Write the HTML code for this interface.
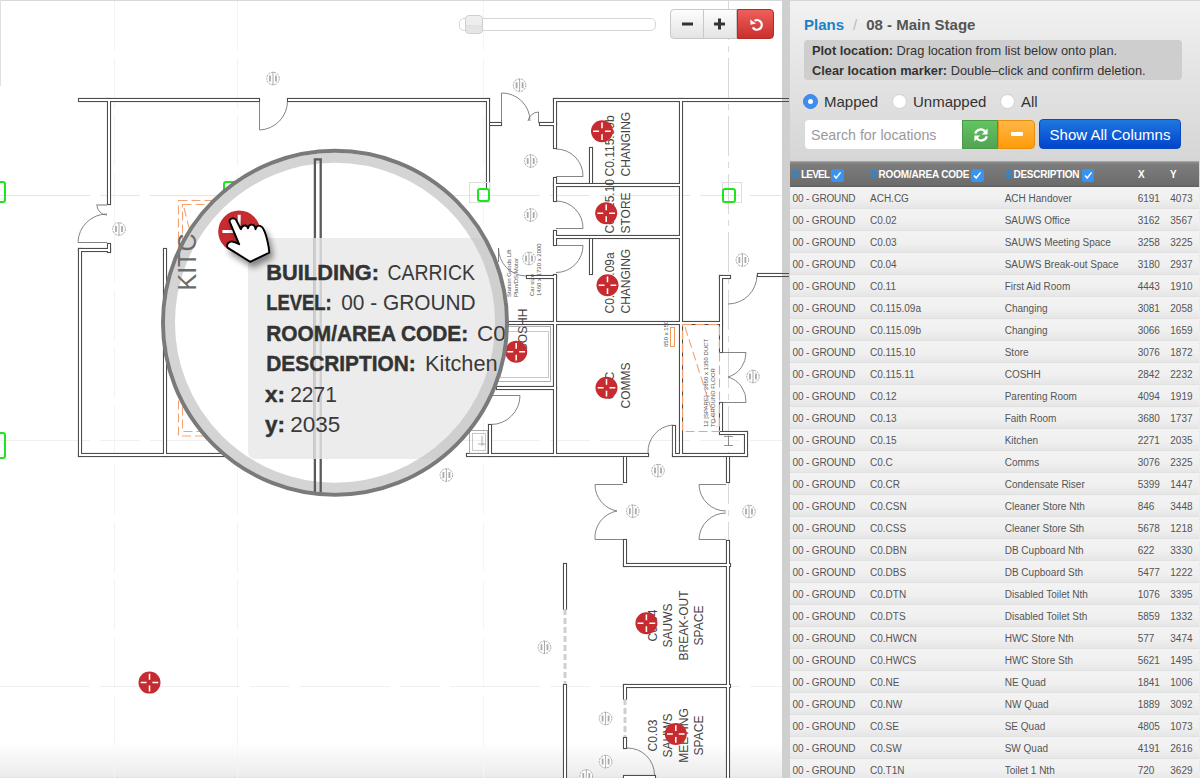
<!DOCTYPE html>
<html><head><meta charset="utf-8">
<style>
*{box-sizing:border-box;margin:0;padding:0}
html,body{width:1200px;height:778px;overflow:hidden;background:#fff;font-family:"Liberation Sans",sans-serif}
.abs{position:absolute}
#map{position:absolute;left:0;top:0;width:782px;height:778px;overflow:hidden;background:linear-gradient(#fff 0,#fff 742px,#ececec 776px,#e2e2e2 778px)}
#split{position:absolute;left:782px;top:0;width:8px;height:778px;background:#cfcfcf}
#panel{position:absolute;left:790px;top:0;width:410px;height:778px;background:linear-gradient(#d6d6d6 0,#d6d6d6 1px,#f2f2f2 1px,#e6e6e6 60px,#d6d6d6 160px)}
.crumb{position:absolute;left:14px;top:16px;font-size:15px;font-weight:bold;color:#555;white-space:nowrap}
.crumb .p{color:#1a82c8}
.crumb .s{color:#bbb;font-weight:normal;padding:0 9px}
.info{position:absolute;left:14px;top:40px;width:378px;height:40px;background:#cecece;border-radius:4px;font-size:12.8px;color:#333;padding:1px 0 0 8px;line-height:20px;white-space:nowrap}
.radio{position:absolute;top:93px;font-size:15px;color:#333;white-space:nowrap}
.rb{position:absolute;top:94px;width:15px;height:15px;border-radius:50%;background:#fff;border:1px solid #d0d0d0}
.rb.on{background:#3d8ef0;border-color:#3a86e6}
.rb.on:after{content:"";position:absolute;left:4px;top:4px;width:5px;height:5px;border-radius:50%;background:#fff}
.search{position:absolute;left:15px;top:120px;width:157px;height:29px;background:#fff;border-radius:4px 0 0 4px;font-size:14.2px;color:#9a9a9a;padding:7px 0 0 6px;white-space:nowrap}
.bg{position:absolute;left:172px;top:120px;width:36px;height:29px;background:linear-gradient(#62c462,#51a351);border:1px solid #4a9a4a}
.bo{position:absolute;left:208px;top:120px;width:37px;height:29px;background:linear-gradient(#ffb547,#fe9c08);border:1px solid #e8900c;border-radius:0 4px 4px 0}
.bb{position:absolute;left:249px;top:119px;width:142px;height:30px;background:linear-gradient(#1f78e0,#0044cc);border:1px solid #0a4bb8;border-radius:4px;color:#fff;font-size:15px;text-align:center;line-height:29px;white-space:nowrap}
#thead{position:absolute;left:0;top:161px;width:409px;height:26px;background:linear-gradient(#bdbdbd 0,#8c8c8c 1px,#8a8a8a 2px,#7c7c7c 3px,#6c6c6c 24px,#5e5e5e 26px);color:#fff;font-size:10px;font-weight:bold}
#thead span{position:absolute;top:8px;white-space:nowrap}
.sort{position:absolute;top:8px}
.chk{position:absolute;top:8px;width:12.5px;height:12.5px;background:#3794f2;border-radius:2.5px}.chk svg{display:block}
#rows{position:absolute;left:0;top:187px;width:409px}
.r{position:relative;height:22px;background:linear-gradient(#f3f3f3 0,#f0f0f0 12px,#e6e6e6 21px,#dcdcdc 22px);font-size:10px;color:#555;white-space:nowrap}
.r span{position:absolute;top:6px}
.c1{left:2.5px;letter-spacing:-0.15px}.c2{left:80px}.c3{left:214.7px}.c4{left:347.7px}.c5{left:380.3px}
#ctrl .track{position:absolute;left:459px;top:18px;width:197px;height:13px;border:1px solid #d6d6d6;border-radius:5px;background:#fff}
#ctrl .handle{position:absolute;left:465px;top:15px;width:18px;height:19px;border:1px solid #cfcfcf;border-radius:4px;background:linear-gradient(#f0f0f0,#ececec 50%,#e2e2e2 51%,#e6e6e6)}
#ctrl .zb{position:absolute;top:9px;height:30px}
#ctrl .zm{left:670px;width:34px;border:1px solid #c8c8c8;border-radius:4px 0 0 4px;background:linear-gradient(#fdfdfd,#e4e4e4)}
#ctrl .zp{left:703px;width:34px;border:1px solid #c8c8c8;background:linear-gradient(#fdfdfd,#e4e4e4)}
#ctrl .zr{left:737px;width:37px;border:1px solid #b62a25;border-radius:0 4px 4px 0;background:linear-gradient(#ee5f5b,#c9302c)}
#ctrl .zb svg{position:absolute;left:-1px;top:-1px}
</style></head><body>
<div id="map">
<svg id="plan" width="782" height="778" viewBox="0 0 782 778">
<g stroke="#e6e6e6" stroke-width="1" fill="none">
<path d="M0 195.5H782" stroke-dasharray="90 10 40 10"/>
<path d="M0 440.5H782" stroke="#f0f0f0" stroke-dasharray="90 10 40 10"/>
<path d="M0 686.5H782" stroke="#efefef" stroke-dasharray="90 10 40 10"/>
<path d="M114.5 0V778" stroke="#f3f3f3" stroke-dasharray="50 8"/>
<path d="M237.5 0V778" stroke="#f3f3f3" stroke-dasharray="50 8"/>
<path d="M483.5 0V778" stroke="#f5f5f5" stroke-dasharray="50 8"/>
<path d="M0 0.5H782" stroke="#d8d8d8"/><path d="M0.5 0V86" stroke="#e0e0e0"/>
<path d="M728.5 0V778" stroke="#d8d8d8" stroke-dasharray="40 6 6 6"/>
</g>
<g fill="none" stroke="#4d4d4d" stroke-width="1.15">
<rect x="78.5" y="98.5" width="181" height="3"/>
<rect x="287.5" y="98.5" width="202" height="3"/>
<rect x="486.5" y="98.5" width="3" height="91"/>
<rect x="489.5" y="122.5" width="12" height="3"/>
<rect x="539.5" y="122.5" width="17" height="3"/>
<rect x="553.5" y="98.5" width="3" height="50"/>
<rect x="553.5" y="98.5" width="229" height="3"/>
<rect x="679.5" y="98.5" width="3" height="358"/>
<rect x="553.5" y="183.5" width="127" height="3"/>
<rect x="553.5" y="235.5" width="127" height="3"/>
<rect x="553.5" y="177.5" width="3" height="24"/>
<rect x="553.5" y="230.5" width="3" height="15"/>
<rect x="553.5" y="274.5" width="3" height="182"/>
<rect x="589.5" y="147.5" width="3" height="36"/>
<rect x="589.5" y="238.5" width="3" height="36"/>
<rect x="526.5" y="275.5" width="30" height="3"/>
<rect x="78.5" y="248.5" width="3" height="208"/>
<rect x="78.5" y="248.5" width="32" height="3"/>
<rect x="107.5" y="243.5" width="3" height="9"/>
<rect x="107.5" y="98.5" width="3" height="106"/>
<rect x="163.5" y="248.5" width="3" height="208"/>
<rect x="78.5" y="453.5" width="152" height="3"/>
<rect x="466.5" y="453.5" width="182" height="3"/>
<rect x="672.5" y="453.5" width="75" height="3"/>
<rect x="496.5" y="386.5" width="60" height="3"/>
<rect x="488.5" y="424.5" width="3" height="32"/>
<rect x="496.5" y="321.5" width="226" height="3"/>
<rect x="719.5" y="275.5" width="3" height="77"/>
<rect x="719.5" y="275.5" width="11" height="3"/>
<rect x="757.5" y="273.5" width="25" height="3"/>
<rect x="719.5" y="402.5" width="3" height="29"/>
<rect x="719.5" y="431.5" width="28" height="3"/>
<rect x="744.5" y="431.5" width="3" height="25"/>
<rect x="672.5" y="425.5" width="3" height="31"/>
<rect x="726.5" y="456.5" width="3" height="26"/>
<rect x="726.5" y="540.5" width="3" height="238"/>
<rect x="623.5" y="563.5" width="107" height="3"/>
<rect x="623.5" y="456.5" width="3" height="26"/>
<rect x="623.5" y="539.5" width="3" height="27"/>
<rect x="563.5" y="563.5" width="3" height="46"/>
<rect x="563.5" y="684.5" width="3" height="94"/>
<rect x="623.5" y="684.5" width="107" height="3"/>
<rect x="623.5" y="684.5" width="3" height="15"/>
<rect x="623.5" y="737.5" width="3" height="11"/>
<rect x="623.5" y="775.5" width="32" height="3"/>
</g><g fill="#fff">
<rect x="79" y="99" width="180" height="2"/>
<rect x="288" y="99" width="201" height="2"/>
<rect x="487" y="99" width="2" height="90"/>
<rect x="490" y="123" width="11" height="2"/>
<rect x="540" y="123" width="16" height="2"/>
<rect x="554" y="99" width="2" height="49"/>
<rect x="554" y="99" width="228" height="2"/>
<rect x="680" y="99" width="2" height="357"/>
<rect x="554" y="184" width="126" height="2"/>
<rect x="554" y="236" width="126" height="2"/>
<rect x="554" y="178" width="2" height="23"/>
<rect x="554" y="231" width="2" height="14"/>
<rect x="554" y="275" width="2" height="181"/>
<rect x="590" y="148" width="2" height="35"/>
<rect x="590" y="239" width="2" height="35"/>
<rect x="527" y="276" width="29" height="2"/>
<rect x="79" y="249" width="2" height="207"/>
<rect x="79" y="249" width="31" height="2"/>
<rect x="108" y="244" width="2" height="8"/>
<rect x="108" y="99" width="2" height="105"/>
<rect x="164" y="249" width="2" height="207"/>
<rect x="79" y="454" width="151" height="2"/>
<rect x="467" y="454" width="181" height="2"/>
<rect x="673" y="454" width="74" height="2"/>
<rect x="497" y="387" width="59" height="2"/>
<rect x="489" y="425" width="2" height="31"/>
<rect x="497" y="322" width="225" height="2"/>
<rect x="720" y="276" width="2" height="76"/>
<rect x="720" y="276" width="10" height="2"/>
<rect x="758" y="274" width="24" height="2"/>
<rect x="720" y="403" width="2" height="28"/>
<rect x="720" y="432" width="27" height="2"/>
<rect x="745" y="432" width="2" height="24"/>
<rect x="673" y="426" width="2" height="30"/>
<rect x="727" y="457" width="2" height="25"/>
<rect x="727" y="541" width="2" height="237"/>
<rect x="624" y="564" width="106" height="2"/>
<rect x="624" y="457" width="2" height="25"/>
<rect x="624" y="540" width="2" height="26"/>
<rect x="564" y="564" width="2" height="45"/>
<rect x="564" y="685" width="2" height="93"/>
<rect x="624" y="685" width="106" height="2"/>
<rect x="624" y="685" width="2" height="14"/>
<rect x="624" y="738" width="2" height="10"/>
<rect x="624" y="776" width="31" height="2"/>
</g>
<path fill="none" stroke="#666" stroke-width="0.8" d="M259.5 101L259.5 130M259.5 130A29 29 0 0 0 287.5 101M501.5 123L501.5 93M501.5 93A28 28 0 0 1 530 121M538.5 123L538.5 112M538.5 112A11 11 0 0 0 528 121M556 176.5L583 176.5M556 149A27 27 0 0 1 583 176.5M556 228.5L583 228.5M556 201A27 27 0 0 1 583 228.5M556 245.5L583 245.5M583 245.5A27 27 0 0 1 556 272.5M78 242.5L107 242.5M78 242.5A29 29 0 0 1 107 214M97 205.5A10 10 0 0 0 107 215M526 276A28 28 0 0 1 498.5 248M498.5 248L498.5 262M491 395.5L520 395.5M520 395.5A29 29 0 0 1 491 424.5M672.5 425L672.5 453M648 453A27 27 0 0 1 672.5 425M728 304A29 29 0 0 0 757 275M719 352.5L746 352.5M746 352.5A25 25 0 0 1 728 377M719 402.5L746 402.5M746 402.5A25 25 0 0 0 728 377M699 484.5L726 484.5M699 484.5A27 27 0 0 0 726 511M699 539.5L726 539.5M699 539.5A27 27 0 0 1 726 513M595 484.5L623 484.5M595 484.5A27 27 0 0 0 617 511M595 539.5L623 539.5M595 539.5A27 27 0 0 1 617 511M627 748A27 27 0 0 1 654.5 775"/>
<path d="M96 205H107" stroke="#bbb" stroke-width="2"/>
<g stroke="#cfcfcf" stroke-width="3" stroke-dasharray="6 3"><path d="M565 609V684"/><path d="M625 699V737"/></g>
<g fill="none" stroke="#999" stroke-width="0.8">
<rect x="497.5" y="326.5" width="53" height="55"/><rect x="500.5" y="331.5" width="48" height="46" stroke="#bbb"/>
<rect x="469.5" y="430.5" width="18" height="23"/><rect x="472.5" y="433.5" width="13" height="17" stroke="#bbb"/>
<path d="M478 444h8M482 436v10"/>
<path d="M724 436.5h9M724 445.5h9M728.5 436v10" stroke="#777"/>
</g>
<g fill="#fff" stroke="#888" stroke-width="0.7">
<circle cx="273" cy="78.5" r="6.3" stroke-dasharray="2.2 0.8"/><path d="M273 72.0v13" stroke="#888"/><path d="M270 75.5v6M276 75.5v6" stroke="#aaa" stroke-width="1.8"/>
<circle cx="519.6" cy="85.2" r="6.3" stroke-dasharray="2.2 0.8"/><path d="M519.6 78.7v13" stroke="#888"/><path d="M516.6 82.2v6M522.6 82.2v6" stroke="#aaa" stroke-width="1.8"/>
<circle cx="530.7" cy="161" r="6.3" stroke-dasharray="2.2 0.8"/><path d="M530.7 154.5v13" stroke="#888"/><path d="M527.7 158v6M533.7 158v6" stroke="#aaa" stroke-width="1.8"/>
<circle cx="530.7" cy="215" r="6.3" stroke-dasharray="2.2 0.8"/><path d="M530.7 208.5v13" stroke="#888"/><path d="M527.7 212v6M533.7 212v6" stroke="#aaa" stroke-width="1.8"/>
<circle cx="529" cy="258.5" r="6.3" stroke-dasharray="2.2 0.8"/><path d="M529 252.0v13" stroke="#888"/><path d="M526 255.5v6M532 255.5v6" stroke="#aaa" stroke-width="1.8"/>
<circle cx="742.4" cy="260" r="6.3" stroke-dasharray="2.2 0.8"/><path d="M742.4 253.5v13" stroke="#888"/><path d="M739.4 257v6M745.4 257v6" stroke="#aaa" stroke-width="1.8"/>
<circle cx="753" cy="376.5" r="6.3" stroke-dasharray="2.2 0.8"/><path d="M753 370.0v13" stroke="#888"/><path d="M750 373.5v6M756 373.5v6" stroke="#aaa" stroke-width="1.8"/>
<circle cx="658" cy="470.6" r="6.3" stroke-dasharray="2.2 0.8"/><path d="M658 464.1v13" stroke="#888"/><path d="M655 467.6v6M661 467.6v6" stroke="#aaa" stroke-width="1.8"/>
<circle cx="749" cy="511.5" r="6.3" stroke-dasharray="2.2 0.8"/><path d="M749 505.0v13" stroke="#888"/><path d="M746 508.5v6M752 508.5v6" stroke="#aaa" stroke-width="1.8"/>
<circle cx="632.8" cy="511.2" r="6.3" stroke-dasharray="2.2 0.8"/><path d="M632.8 504.7v13" stroke="#888"/><path d="M629.8 508.2v6M635.8 508.2v6" stroke="#aaa" stroke-width="1.8"/>
<circle cx="446.4" cy="475" r="6.3" stroke-dasharray="2.2 0.8"/><path d="M446.4 468.5v13" stroke="#888"/><path d="M443.4 472v6M449.4 472v6" stroke="#aaa" stroke-width="1.8"/>
<circle cx="544.5" cy="647.3" r="6.3" stroke-dasharray="2.2 0.8"/><path d="M544.5 640.8v13" stroke="#888"/><path d="M541.5 644.3v6M547.5 644.3v6" stroke="#aaa" stroke-width="1.8"/>
<circle cx="605.6" cy="718.5" r="6.3" stroke-dasharray="2.2 0.8"/><path d="M605.6 712.0v13" stroke="#888"/><path d="M602.6 715.5v6M608.6 715.5v6" stroke="#aaa" stroke-width="1.8"/>
<circle cx="605.6" cy="761.6" r="6.3" stroke-dasharray="2.2 0.8"/><path d="M605.6 755.1v13" stroke="#888"/><path d="M602.6 758.6v6M608.6 758.6v6" stroke="#aaa" stroke-width="1.8"/>
<circle cx="586.3" cy="776" r="6.3" stroke-dasharray="2.2 0.8"/><path d="M586.3 769.5v13" stroke="#888"/><path d="M583.3 773v6M589.3 773v6" stroke="#aaa" stroke-width="1.8"/>
<circle cx="119" cy="229" r="6.3" stroke-dasharray="2.2 0.8"/><path d="M119 222.5v13" stroke="#888"/><path d="M116 226v6M122 226v6" stroke="#aaa" stroke-width="1.8"/>
</g>
<g fill="none" stroke="#f5a270" stroke-width="1.1" stroke-dasharray="9 4">
<rect x="178.5" y="200.5" width="90" height="235.5"/><rect x="182.5" y="204.5" width="80" height="227"/><path d="M184 208L205 290"/>
<rect x="682.5" y="324.5" width="37" height="107"/><path d="M685 327L717 427"/>
</g>
<rect x="670.5" y="327.5" width="4" height="19" fill="none" stroke="#f39a5e" stroke-width="1"/>
<g fill="none" stroke="#dedede" stroke-width="1"><rect x="469.5" y="182.5" width="20" height="20"/><rect x="722.5" y="182.5" width="19" height="20"/></g>
<g fill="none" stroke="#1ee61e" stroke-width="2">
<rect x="-4" y="182" width="9" height="20" rx="2"/>
<rect x="-4" y="433" width="9" height="25" rx="2"/>
<rect x="478" y="189" width="11" height="12" rx="2"/>
<rect x="723" y="189" width="12" height="13" rx="2"/>
<rect x="224" y="182" width="12" height="13" rx="2"/>
</g>
<g font-family="Liberation Sans" font-size="12" fill="#444">
<text transform="translate(614 176.5) rotate(-90)" text-anchor="start">C0.115.09b</text><text transform="translate(630 176.5) rotate(-90)" text-anchor="start">CHANGING</text>
<text transform="translate(614 233.5) rotate(-90)" text-anchor="start">C0.115.10</text><text transform="translate(630 233.5) rotate(-90)" text-anchor="start">STORE</text>
<text transform="translate(614 313.5) rotate(-90)" text-anchor="start">C0.115.09a</text><text transform="translate(630 313.5) rotate(-90)" text-anchor="start">CHANGING</text>
<text transform="translate(614 385.5) rotate(-90)" text-anchor="middle">C0.C</text><text transform="translate(630 385.5) rotate(-90)" text-anchor="middle">COMMS</text>
<text transform="translate(526.5 352) rotate(-90)" text-anchor="start">COSHH</text>
<text transform="translate(657 625.5) rotate(-90)" text-anchor="middle">C0.04</text><text transform="translate(672 625.5) rotate(-90)" text-anchor="middle">SAUWS</text><text transform="translate(688 625.5) rotate(-90)" text-anchor="middle">BREAK-OUT</text><text transform="translate(702.5 625.5) rotate(-90)" text-anchor="middle">SPACE</text>
<text transform="translate(657 735.5) rotate(-90)" text-anchor="middle">C0.03</text><text transform="translate(672 735.5) rotate(-90)" text-anchor="middle">SAUWS</text><text transform="translate(688 735.5) rotate(-90)" text-anchor="middle">MEETING</text><text transform="translate(702.5 735.5) rotate(-90)" text-anchor="middle">SPACE</text>
</g>
<g font-family="Liberation Sans" font-size="6" fill="#555">
<text transform="translate(511 297) rotate(-90)" text-anchor="start">Station Goods Lift</text><text transform="translate(518 297) rotate(-90)" text-anchor="start">Plan/DS Motor</text>
<text transform="translate(534 296) rotate(-90)" text-anchor="start">Car size</text><text transform="translate(541 296) rotate(-90)" text-anchor="start">1460 x 1730 x 2000</text>
<text transform="translate(668 347) rotate(-90)" text-anchor="start">650 x 150</text>
<text transform="translate(708 427) rotate(-90)" text-anchor="start">12 [SPARE] - 2850 x 1350 DUCT</text><text transform="translate(715 427) rotate(-90)" text-anchor="start">TO GROUND FLOOR</text>
</g>
<circle cx="149.5" cy="682.6" r="11" fill="#c62b30"/><path d="M140.7 682.6H146.53M152.47 682.6H158.3M149.5 673.8000000000001V679.63M149.5 685.57V691.4" stroke="#fff" stroke-width="1.54"/>
<circle cx="602" cy="131.2" r="11" fill="#c62b30"/><path d="M593.2 131.2H599.03M604.97 131.2H610.8M602 122.39999999999999V128.23M602 134.17V140.0" stroke="#fff" stroke-width="1.54"/>
<circle cx="606.2" cy="213.2" r="11" fill="#c62b30"/><path d="M597.4000000000001 213.2H603.23M609.1700000000001 213.2H615.0M606.2 204.39999999999998V210.23M606.2 216.17V222.0" stroke="#fff" stroke-width="1.54"/>
<circle cx="607.5" cy="285.2" r="11" fill="#c62b30"/><path d="M598.7 285.2H604.53M610.47 285.2H616.3M607.5 276.4V282.22999999999996M607.5 288.17V294.0" stroke="#fff" stroke-width="1.54"/>
<circle cx="516.2" cy="351.7" r="11" fill="#c62b30"/><path d="M507.40000000000003 351.7H513.23M519.1700000000001 351.7H525.0M516.2 342.9V348.72999999999996M516.2 354.67V360.5" stroke="#fff" stroke-width="1.54"/>
<circle cx="606.5" cy="387.7" r="11" fill="#c62b30"/><path d="M597.7 387.7H603.53M609.47 387.7H615.3M606.5 378.9V384.72999999999996M606.5 390.67V396.5" stroke="#fff" stroke-width="1.54"/>
<circle cx="646.4" cy="623.2" r="11" fill="#c62b30"/><path d="M637.6 623.2H643.43M649.37 623.2H655.1999999999999M646.4 614.4000000000001V620.23M646.4 626.1700000000001V632.0" stroke="#fff" stroke-width="1.54"/>
<circle cx="675.8" cy="734" r="11" fill="#c62b30"/><path d="M667.0 734H672.8299999999999M678.77 734H684.5999999999999M675.8 725.2V731.03M675.8 736.97V742.8" stroke="#fff" stroke-width="1.54"/>
<defs><clipPath id="lc"><circle cx="335" cy="322.7" r="172"/></clipPath><filter id="hs" x="-50%" y="-50%" width="200%" height="200%"><feGaussianBlur in="SourceAlpha" stdDeviation="3"/><feOffset dx="3" dy="5"/><feComponentTransfer><feFuncA type="linear" slope="0.45"/></feComponentTransfer><feMerge><feMergeNode/><feMergeNode in="SourceGraphic"/></feMerge></filter></defs>
<g clip-path="url(#lc)">
<circle cx="335" cy="322.7" r="174" fill="#fff"/>
<rect x="248" y="238" width="300" height="221" rx="7" fill="#ebebeb" fill-opacity="0.93"/>
<circle cx="335" cy="322.7" r="165" fill="none" stroke="#c6c6c6" stroke-opacity="0.75" stroke-width="10"/>
<rect x="314.9" y="159.4" width="5.8" height="340" fill="none" stroke="#5a5a5a" stroke-width="2.3"/>
<rect x="314" y="238" width="8" height="221" fill="#ebebeb" fill-opacity="0.8"/>
<g font-family="Liberation Sans" font-size="22.5" fill="#333">
<text x="266.3" y="279.7" font-weight="bold" stroke="#333" stroke-width="0.45" textLength="112.6" lengthAdjust="spacingAndGlyphs">BUILDING:</text><text x="387.6" y="279.7" fill="#3a3a3a" textLength="87.4" lengthAdjust="spacingAndGlyphs">CARRICK</text>
<text x="266.3" y="310.2" font-weight="bold" stroke="#333" stroke-width="0.45" textLength="65.4" lengthAdjust="spacingAndGlyphs">LEVEL:</text><text x="341.2" y="310.2" fill="#3a3a3a" textLength="134.4" lengthAdjust="spacingAndGlyphs">00 - GROUND</text>
<text x="266.3" y="340.7" font-weight="bold" stroke="#333" stroke-width="0.45" textLength="201.9" lengthAdjust="spacingAndGlyphs">ROOM/AREA CODE:</text><text x="477" y="340.7" fill="#3a3a3a">C0.15</text>
<text x="266.3" y="371.2" font-weight="bold" stroke="#333" stroke-width="0.45" textLength="149.4" lengthAdjust="spacingAndGlyphs">DESCRIPTION:</text><text x="425" y="371.2" fill="#3a3a3a" textLength="72.7" lengthAdjust="spacingAndGlyphs">Kitchen</text>
<text x="265" y="401.7" font-weight="bold" stroke="#333" stroke-width="0.45">x:</text><text x="290.2" y="401.7" fill="#3a3a3a" textLength="46.6" lengthAdjust="spacingAndGlyphs">2271</text>
<text x="265" y="432.2" font-weight="bold" stroke="#333" stroke-width="0.45">y:</text><text x="290.2" y="432.2" fill="#3a3a3a">2035</text>
</g>
<circle cx="239.2" cy="231.5" r="21" fill="#c62b30"/><path d="M222.39999999999998 231.5H233.53M244.86999999999998 231.5H256.0M239.2 214.7V225.83M239.2 237.17V248.3" stroke="#fff" stroke-width="2.94"/>
<path d="M232.6,218.4 C230.6,218.6 229.2,220 229.6,221.7 L239.2,244.3 C236,242.4 232.5,240.8 230,241.8 C227.8,242.6 226.4,245 227.5,247.6 L250.1,261.8 L269.3,252.6 C268.9,248 268.4,245 267.6,241.8 C266.6,237 265.3,232.5 263.5,229.2 C262.8,227.6 261.8,226.6 261,226.3 C259.6,225.6 258.2,225.4 257.2,226.2 C256.4,226.8 255.8,228 255.5,229.2 C255.2,226.4 253.4,224.6 251.4,224.6 C249.6,224.6 248.4,226.4 248,228.4 C247.6,226.4 246,225.2 244.3,225.5 C242.6,225.8 241.4,227.4 240.9,229.2 L235.9,219.6 C235.2,218.8 234,218.3 232.6,218.4 Z" fill="#fff" stroke="#000" stroke-width="1.9" stroke-linejoin="round" filter="url(#hs)"/>
</g>
<text transform="translate(195.5 290.5) rotate(-90)" font-family="Liberation Sans" font-size="25" fill="#6a6a6a">KITC</text>
<circle cx="335" cy="322.7" r="172" fill="none" stroke="#7a7a7a" stroke-width="4"/>
</svg>
</div>
<div id="ctrl">
  <div class="track"></div><div class="handle"></div>
  <div class="zb zm"><svg width="34" height="30"><rect x="12" y="13.5" width="11" height="3" fill="#333"/></svg></div>
  <div class="zb zp"><svg width="33" height="30"><rect x="11" y="13.5" width="11" height="3" fill="#333"/><rect x="15" y="9.5" width="3" height="11" fill="#333"/></svg></div>
  <div class="zb zr"><svg width="37" height="30"><path d="M15.8 18.3A4.8 4.8 0 1 0 17.6 11.7" fill="none" stroke="#fff" stroke-width="2.3"/><path d="M13.2 10.4L13.6 15.8L19 14.4Z" fill="#fff"/></svg></div>
</div>
<div id="split"></div><div class="abs" style="left:782px;top:98px;width:7px;height:4px;border-top:1.15px solid #4d4d4d;border-bottom:1.15px solid #4d4d4d"></div><div class="abs" style="left:782px;top:273px;width:7px;height:4px;border-top:1.15px solid #4d4d4d;border-bottom:1.15px solid #4d4d4d"></div>
<div id="panel">
  <div class="crumb"><span class="p">Plans</span><span class="s">/</span>08 - Main Stage</div>
  <div class="info"><b>Plot location:</b> Drag location from list below onto plan.<br><b>Clear location marker:</b> Double–click and confirm deletion.</div>
  <div class="rb on" style="left:13px"></div><div class="radio" style="left:34px">Mapped</div>
  <div class="rb" style="left:102px"></div><div class="radio" style="left:123px">Unmapped</div>
  <div class="rb" style="left:210px"></div><div class="radio" style="left:231px">All</div>
  <div class="search">Search for locations</div>
  <div class="bg"><svg width="36" height="29" style="position:absolute;left:-1px;top:-1px"><g fill="none" stroke="#fff" stroke-width="2.2"><path d="M13.2 13.6A5.6 5.6 0 0 1 23.4 12.2"/><path d="M24.8 16.4A5.6 5.6 0 0 1 14.6 17.8"/></g><path d="M25.6 8.6V14.4H19.8Z M12.4 21.4V15.6H18.2Z" fill="#fff"/></svg></div>
  <div class="bo"><div style="position:absolute;left:12px;top:11px;width:11.6px;height:3.8px;background:#fff;border-radius:1px"></div></div>
  <div class="bb">Show All Columns</div>
  <div id="thead">
    <svg class="sort" style="left:2px" width="7" height="10" viewBox="0 0 7 10"><path d="M3.5 0L7 4.2H0Z M3.5 10L7 5.8H0Z" fill="#2389e0"/></svg><span style="left:11px;letter-spacing:-0.8px">LEVEL</span><div class="chk" style="left:41px"><svg width="12.5" height="12.5" viewBox="0 0 12.5 12.5"><path d="M3 6.6L5.2 9L9.6 3.4" fill="none" stroke="#fff" stroke-width="1.5"/></svg></div>
    <svg class="sort" style="left:80px" width="7" height="10" viewBox="0 0 7 10"><path d="M3.5 0L7 4.2H0Z M3.5 10L7 5.8H0Z" fill="#2389e0"/></svg><span style="left:88.6px;letter-spacing:-0.2px">ROOM/AREA CODE</span><div class="chk" style="left:181.4px"><svg width="12.5" height="12.5" viewBox="0 0 12.5 12.5"><path d="M3 6.6L5.2 9L9.6 3.4" fill="none" stroke="#fff" stroke-width="1.5"/></svg></div>
    <svg class="sort" style="left:214.6px" width="7" height="10" viewBox="0 0 7 10"><path d="M3.5 0L7 4.2H0Z M3.5 10L7 5.8H0Z" fill="#2389e0"/></svg><span style="left:223.4px;letter-spacing:-0.22px">DESCRIPTION</span><div class="chk" style="left:291.6px"><svg width="12.5" height="12.5" viewBox="0 0 12.5 12.5"><path d="M3 6.6L5.2 9L9.6 3.4" fill="none" stroke="#fff" stroke-width="1.5"/></svg></div>
    <span style="left:348px">X</span>
    <span style="left:380px">Y</span>
  </div>
  <div class="abs" style="left:409px;top:187px;width:1px;height:591px;background:#ececec"></div>
  <div id="rows">
<div class="r"><span class="c1">00 - GROUND</span><span class="c2">ACH.CG</span><span class="c3">ACH Handover</span><span class="c4">6191</span><span class="c5">4073</span></div>
<div class="r"><span class="c1">00 - GROUND</span><span class="c2">C0.02</span><span class="c3">SAUWS Office</span><span class="c4">3162</span><span class="c5">3567</span></div>
<div class="r"><span class="c1">00 - GROUND</span><span class="c2">C0.03</span><span class="c3">SAUWS Meeting Space</span><span class="c4">3258</span><span class="c5">3225</span></div>
<div class="r"><span class="c1">00 - GROUND</span><span class="c2">C0.04</span><span class="c3">SAUWS Break-out Space</span><span class="c4">3180</span><span class="c5">2937</span></div>
<div class="r"><span class="c1">00 - GROUND</span><span class="c2">C0.11</span><span class="c3">First Aid Room</span><span class="c4">4443</span><span class="c5">1910</span></div>
<div class="r"><span class="c1">00 - GROUND</span><span class="c2">C0.115.09a</span><span class="c3">Changing</span><span class="c4">3081</span><span class="c5">2058</span></div>
<div class="r"><span class="c1">00 - GROUND</span><span class="c2">C0.115.09b</span><span class="c3">Changing</span><span class="c4">3066</span><span class="c5">1659</span></div>
<div class="r"><span class="c1">00 - GROUND</span><span class="c2">C0.115.10</span><span class="c3">Store</span><span class="c4">3076</span><span class="c5">1872</span></div>
<div class="r"><span class="c1">00 - GROUND</span><span class="c2">C0.115.11</span><span class="c3">COSHH</span><span class="c4">2842</span><span class="c5">2232</span></div>
<div class="r"><span class="c1">00 - GROUND</span><span class="c2">C0.12</span><span class="c3">Parenting Room</span><span class="c4">4094</span><span class="c5">1919</span></div>
<div class="r"><span class="c1">00 - GROUND</span><span class="c2">C0.13</span><span class="c3">Faith Room</span><span class="c4">3680</span><span class="c5">1737</span></div>
<div class="r"><span class="c1">00 - GROUND</span><span class="c2">C0.15</span><span class="c3">Kitchen</span><span class="c4">2271</span><span class="c5">2035</span></div>
<div class="r"><span class="c1">00 - GROUND</span><span class="c2">C0.C</span><span class="c3">Comms</span><span class="c4">3076</span><span class="c5">2325</span></div>
<div class="r"><span class="c1">00 - GROUND</span><span class="c2">C0.CR</span><span class="c3">Condensate Riser</span><span class="c4">5399</span><span class="c5">1447</span></div>
<div class="r"><span class="c1">00 - GROUND</span><span class="c2">C0.CSN</span><span class="c3">Cleaner Store Nth</span><span class="c4">846</span><span class="c5">3448</span></div>
<div class="r"><span class="c1">00 - GROUND</span><span class="c2">C0.CSS</span><span class="c3">Cleaner Store Sth</span><span class="c4">5678</span><span class="c5">1218</span></div>
<div class="r"><span class="c1">00 - GROUND</span><span class="c2">C0.DBN</span><span class="c3">DB Cupboard Nth</span><span class="c4">622</span><span class="c5">3330</span></div>
<div class="r"><span class="c1">00 - GROUND</span><span class="c2">C0.DBS</span><span class="c3">DB Cupboard Sth</span><span class="c4">5477</span><span class="c5">1222</span></div>
<div class="r"><span class="c1">00 - GROUND</span><span class="c2">C0.DTN</span><span class="c3">Disabled Toilet Nth</span><span class="c4">1076</span><span class="c5">3395</span></div>
<div class="r"><span class="c1">00 - GROUND</span><span class="c2">C0.DTS</span><span class="c3">Disabled Toilet Sth</span><span class="c4">5859</span><span class="c5">1332</span></div>
<div class="r"><span class="c1">00 - GROUND</span><span class="c2">C0.HWCN</span><span class="c3">HWC Store Nth</span><span class="c4">577</span><span class="c5">3474</span></div>
<div class="r"><span class="c1">00 - GROUND</span><span class="c2">C0.HWCS</span><span class="c3">HWC Store Sth</span><span class="c4">5621</span><span class="c5">1495</span></div>
<div class="r"><span class="c1">00 - GROUND</span><span class="c2">C0.NE</span><span class="c3">NE Quad</span><span class="c4">1841</span><span class="c5">1006</span></div>
<div class="r"><span class="c1">00 - GROUND</span><span class="c2">C0.NW</span><span class="c3">NW Quad</span><span class="c4">1889</span><span class="c5">3092</span></div>
<div class="r"><span class="c1">00 - GROUND</span><span class="c2">C0.SE</span><span class="c3">SE Quad</span><span class="c4">4805</span><span class="c5">1073</span></div>
<div class="r"><span class="c1">00 - GROUND</span><span class="c2">C0.SW</span><span class="c3">SW Quad</span><span class="c4">4191</span><span class="c5">2616</span></div>
<div class="r"><span class="c1">00 - GROUND</span><span class="c2">C0.T1N</span><span class="c3">Toilet 1 Nth</span><span class="c4">720</span><span class="c5">3629</span></div>
  </div>
</div>
</body></html>
